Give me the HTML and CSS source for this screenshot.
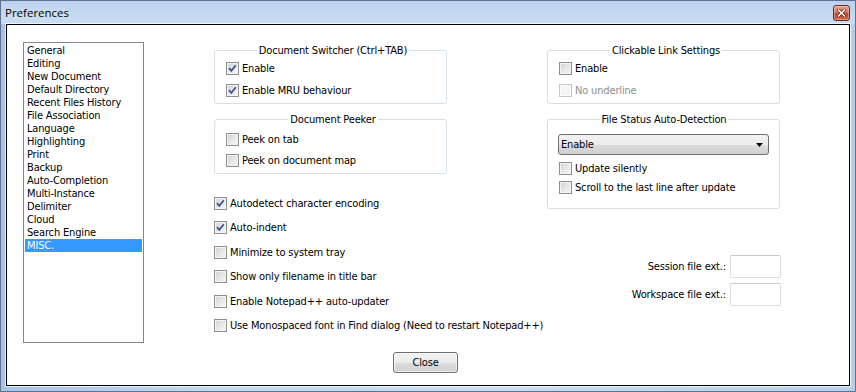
FILE: index.html
```html
<!DOCTYPE html>
<html lang="en">
<head>
  <meta charset="UTF-8" />
  <title>Preferences</title>
  <link rel="stylesheet" href="styles.css">
</head>
<body>
  <div class="window">
    <div class="titlebar">
      <span class="title">Preferences</span>
      <span class="close-btn">
        <svg width="9" height="8" viewBox="0 0 9 8">
          <path d="M1.5 1 L7.5 7 M7.5 1 L1.5 7" stroke="#4a1a10" stroke-width="3" stroke-linecap="square" />
          <path d="M1.5 1 L7.5 7 M7.5 1 L1.5 7" stroke="#ffffff" stroke-width="1.6" stroke-linecap="square" />
        </svg>
      </span>
    </div>

    <div class="client">
      <div class="main">
        <ul class="listbox">
          <li>General</li>
          <li>Editing</li>
          <li>New Document</li>
          <li>Default Directory</li>
          <li>Recent Files History</li>
          <li>File Association</li>
          <li>Language</li>
          <li>Highlighting</li>
          <li>Print</li>
          <li>Backup</li>
          <li>Auto-Completion</li>
          <li>Multi-Instance</li>
          <li>Delimiter</li>
          <li>Cloud</li>
          <li>Search Engine</li>
          <li class="selected">MISC.</li>
        </ul>

        <div class="panel">
          <div class="column">
            <fieldset class="group group-switcher">
              <legend>Document Switcher (Ctrl+TAB)</legend>
              <label class="check"><span class="box checked"><svg width="11" height="11" viewBox="0 0 11 11"><path d="M2 5.2 L4.3 7.8 L8.8 2.2" fill="none" stroke="#3d549a" stroke-width="1.8" /></svg></span>Enable</label>
              <label class="check"><span class="box checked"><svg width="11" height="11" viewBox="0 0 11 11"><path d="M2 5.2 L4.3 7.8 L8.8 2.2" fill="none" stroke="#3d549a" stroke-width="1.8" /></svg></span>Enable MRU behaviour</label>
            </fieldset>

            <fieldset class="group group-peeker">
              <legend>Document Peeker</legend>
              <label class="check"><span class="box"></span>Peek on tab</label>
              <label class="check"><span class="box"></span>Peek on document map</label>
            </fieldset>

            <div class="options">
              <label class="check"><span class="box checked"><svg width="11" height="11" viewBox="0 0 11 11"><path d="M2 5.2 L4.3 7.8 L8.8 2.2" fill="none" stroke="#3d549a" stroke-width="1.8" /></svg></span>Autodetect character encoding</label>
              <label class="check"><span class="box checked"><svg width="11" height="11" viewBox="0 0 11 11"><path d="M2 5.2 L4.3 7.8 L8.8 2.2" fill="none" stroke="#3d549a" stroke-width="1.8" /></svg></span>Auto-indent</label>
              <label class="check"><span class="box"></span>Minimize to system tray</label>
              <label class="check"><span class="box"></span>Show only filename in title bar</label>
              <label class="check"><span class="box"></span>Enable Notepad++ auto-updater</label>
              <label class="check"><span class="box"></span>Use Monospaced font in Find dialog (Need to restart Notepad++)</label>
            </div>
          </div>

          <div class="column column-right">
            <fieldset class="group group-links">
              <legend>Clickable Link Settings</legend>
              <label class="check"><span class="box"></span>Enable</label>
              <label class="check disabled"><span class="box"></span>No underline</label>
            </fieldset>

            <fieldset class="group group-status">
              <legend>File Status Auto-Detection</legend>
              <div class="combo">
                <span>Enable</span>
                <svg width="7" height="4" viewBox="0 0 7 4"><path d="M0 0 H7 L3.5 4 Z" fill="#000" /></svg>
              </div>
              <label class="check"><span class="box"></span>Update silently</label>
              <label class="check"><span class="box"></span>Scroll to the last line after update</label>
            </fieldset>

            <div class="ext-fields">
              <div class="ext-row"><span>Session file ext.:</span><span class="textbox"></span></div>
              <div class="ext-row"><span>Workspace file ext.:</span><span class="textbox"></span></div>
            </div>
          </div>
        </div>
      </div>

      <div class="footer">
        <button class="button">Close</button>
      </div>
    </div>
  </div>
</body>
</html>
```

FILE: styles.css
```css
* {
  box-sizing: border-box;
}

body {
  margin: 0;
  font-family: 'DejaVu Sans Condensed', 'Liberation Sans', sans-serif;
  font-size: 11px;
  letter-spacing: -0.16px;
  color: #000;
}

.window {
  width: 856px;
  height: 392px;
  border: 1px solid #5f7391;
  background: linear-gradient(90deg, #a9c3e3 0%, #c4d9f0 25%, #c9dcf2 60%, #b7d0ea 100%);
}

.titlebar {
  height: 23px;
  display: flex;
  justify-content: space-between;
  align-items: flex-start;
  padding: 0 5px 0 4px;
  background: linear-gradient(180deg, #bbd2ed 0%, #c4d9f1 60%, #c8dcf2 100%);
}

.title {
  font-family: 'Open Sans', 'Liberation Sans', sans-serif;
  font-size: 11.5px;
  letter-spacing: 0;
  line-height: 14px;
  margin-top: 5px;
  text-shadow: 0 0 6px rgba(255,255,255,0.9);
}

.close-btn {
  width: 17px;
  height: 16px;
  margin-top: 4px;
  border: 1px solid #5b2a22;
  border-radius: 3px;
  background: linear-gradient(180deg, #eba18c 0%, #d9765c 45%, #c2432a 55%, #d5654a 100%);
  box-shadow: inset 0 0 0 1px rgba(255,255,255,0.35);
  display: flex;
  align-items: center;
  justify-content: center;
}

.client {
  height: 362px;
  margin: 0 5px;
  border: 1px solid #000;
  background: #fff;
  box-shadow: 0 0 0 1px rgba(255,255,255,0.7);
  display: flex;
  flex-direction: column;
  padding: 17px 0 0 16px;
}

.main {
  display: flex;
  height: 301px;
}

.listbox {
  width: 121px;
  height: 301px;
  margin: 0;
  padding: 1px;
  list-style: none;
  border: 1px solid #828790;
}

.listbox li {
  height: 13px;
  line-height: 13px;
  padding-left: 2px;
  white-space: nowrap;
}

.listbox li.selected {
  background: #3399ff;
  color: #fff;
  outline: 1px dotted #c9803c;
  outline-offset: -1px;
}

.panel {
  display: flex;
  gap: 100px;
  margin-left: 70px;
  padding-top: 2px;
}

.column {
  width: 233px;
  display: flex;
  flex-direction: column;
}

.column-right {
  width: 234px;
}

.group {
  width: 233px;
  min-width: 0;
  margin: 0;
  border: 1px solid #d5dfe5;
  border-radius: 3px;
  padding: 5px 6px 6px 11px;
  display: flex;
  flex-direction: column;
  gap: 9px;
}

.group legend {
  margin: 0 auto;
  padding: 0 2px;
  line-height: 13px;
}

.group-peeker,
.group-status {
  margin-top: 9px;
}

.group-peeker {
  padding-top: 7px;
  gap: 8px;
}

.group-status {
  padding: 8px 10px 14px 11px;
  gap: 6px;
}

.check {
  display: flex;
  align-items: center;
  gap: 3px;
  height: 13px;
  line-height: 13px;
  white-space: nowrap;
}

.check.disabled {
  color: #8d8d8d;
}

.box {
  width: 13px;
  height: 13px;
  flex: none;
  border: 1px solid #8e8f8f;
  background: linear-gradient(135deg, #cfd0d2 0%, #e8e8e9 55%, #f7f7f7 100%);
  box-shadow: inset 0 0 0 1px #f3f3f3;
}

.box svg {
  display: block;
}

.check.disabled .box {
  border-color: #c6c6c6;
  background: #f4f4f4;
  box-shadow: inset 0 0 0 1px #fcfcfc;
}

.combo {
  width: 211px;
  height: 21px;
  margin-left: -1px;
  margin-bottom: 1px;
  border: 1px solid #707070;
  border-radius: 3px;
  background: linear-gradient(180deg, #f2f2f2 0%, #ebebeb 50%, #dddddd 51%, #cfcfcf 100%);
  display: flex;
  align-items: center;
  justify-content: space-between;
  padding: 0 5px 0 2px;
}

.options {
  display: flex;
  flex-direction: column;
  gap: 11.4px;
  margin-top: 23px;
}

.ext-fields {
  margin-top: 46px;
  display: flex;
  flex-direction: column;
  gap: 5px;
}

.ext-row {
  display: flex;
  justify-content: flex-end;
  align-items: center;
  gap: 4px;
}

.textbox {
  width: 51px;
  height: 23px;
  border: 1px solid #dadde4;
  border-top-color: #c5c8cf;
  border-radius: 2px;
  background: #fff;
}

.footer {
  display: flex;
  justify-content: center;
  padding-right: 21px;
  margin-top: 9px;
}

.button {
  width: 65px;
  height: 21px;
  font-family: inherit;
  font-size: 11px;
  letter-spacing: inherit;
  color: #000;
  border: 1px solid #707070;
  border-radius: 3px;
  background: linear-gradient(180deg, #f2f2f2 0%, #ebebeb 50%, #dddddd 51%, #cfcfcf 100%);
  box-shadow: inset 0 0 0 1px rgba(255,255,255,0.6);
  padding: 0;
}
```
